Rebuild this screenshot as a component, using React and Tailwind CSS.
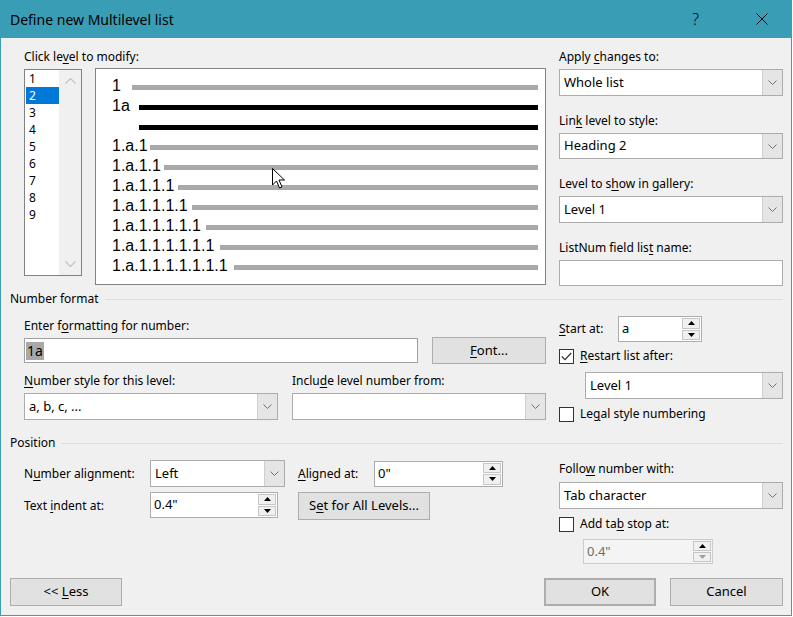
import React from "react";

const U = ({ children }) => <span className="underline underline-offset-2">{children}</span>;

const Chevron = ({ color = "#707070" }) => (
  <svg width="9" height="5" viewBox="0 0 9 5">
    <path d="M0.5 0.5 L4.5 4.5 L8.5 0.5" fill="none" stroke={color} strokeWidth="1" />
  </svg>
);

const Select = ({ value, className = "" }) => (
  <div className={`flex bg-white border border-[#acacac] ${className}`}>
    <div className="flex-1 flex items-center pl-[4px] text-[13px]">{value}</div>
    <div className="w-[20px] bg-[#e5e5e5] border-l border-[#cfcfcf] flex items-center justify-center">
      <Chevron />
    </div>
  </div>
);

const Arrow = ({ up, color = "#000" }) => (
  <svg width="7" height="4" viewBox="0 0 7 4">
    {up ? <path d="M0 4 L3.5 0 L7 4 Z" fill={color} /> : <path d="M0 0 L3.5 4 L7 0 Z" fill={color} />}
  </svg>
);

const Spin = ({ value, className = "", disabled }) => (
  <div
    className={`flex border ${disabled ? "bg-[#f4f4f4] border-[#cccccc] text-[#6d6d6d]" : "bg-white border-[#acacac]"} ${className}`}
  >
    <div className="flex-1 flex items-center pl-[3px] text-[13px]">{value}</div>
    <div className="w-[20px] flex flex-col p-[1px] gap-[1px]">
      <div className="flex-1 bg-[#f0f0f0] border border-[#c6c6c6] flex items-center justify-center">
        <Arrow up />
      </div>
      <div className="flex-1 bg-[#f0f0f0] border border-[#c6c6c6] flex items-center justify-center">
        <Arrow color={disabled ? "#a0a0a0" : "#000"} />
      </div>
    </div>
  </div>
);

const Check = ({ checked }) => (
  <div className="w-[15px] h-[15px] border border-[#333] bg-white flex items-center justify-center shrink-0">
    {checked && (
      <svg width="11" height="9" viewBox="0 0 11 9">
        <path d="M0.8 4.5 L4 7.7 L10.2 1" fill="none" stroke="#333" strokeWidth="1.2" />
      </svg>
    )}
  </div>
);

const Btn = ({ children, className = "" }) => (
  <div className={`flex items-center justify-center bg-[#e1e1e1] border border-[#adadad] text-[13px] ${className}`}>
    <span>{children}</span>
  </div>
);

const rows = [
  { t: "1", w: "w-[20px]", bold: false },
  { t: "1a", w: "w-[27px]", bold: true },
  { t: "", w: "w-[27px]", bold: true },
  { t: "1.a.1", w: "w-[38px]", bold: false },
  { t: "1.a.1.1", w: "w-[52px]", bold: false },
  { t: "1.a.1.1.1", w: "w-[66px]", bold: false },
  { t: "1.a.1.1.1.1", w: "w-[80px]", bold: false },
  { t: "1.a.1.1.1.1.1", w: "w-[94px]", bold: false },
  { t: "1.a.1.1.1.1.1.1", w: "w-[108px]", bold: false },
  { t: "1.a.1.1.1.1.1.1.1", w: "w-[122px]", bold: false },
];

const Header = ({ children }) => (
  <div className="flex items-center h-[16px]">
    <span className="leading-[16px]">{children}</span>
    <div className="flex-1 h-px bg-[#dcdcdc] ml-[6px]" />
  </div>
);

export default function App() {
  return (
    <div className="w-[793px] h-[617px] bg-white font-['Noto_Sans',sans-serif] text-[12px] text-black">
      <div className="w-[792px] h-[616px] flex flex-col">
        {/* title bar */}
        <div className="h-[38px] bg-[#3a9db6] flex items-center pl-[10px] shrink-0">
          <span className="text-[14px]">Define new Multilevel list</span>
          <span className="ml-auto text-[16px] font-light mr-[57px]">?</span>
          <svg width="12" height="12" viewBox="0 0 12 12" className="mr-[24px]">
            <path d="M0.5 0.5 L11.5 11.5 M11.5 0.5 L0.5 11.5" stroke="#000" strokeWidth="1" />
          </svg>
        </div>

        <div className="flex-1 flex flex-col bg-[#f0f0f0] border-x border-b border-[#3a9db6] pl-[9px] pr-[8px] pb-[9px]">
          {/* top section */}
          <div className="flex justify-between ml-[14px] pt-[11px]">
            <div className="w-[522px]">
              <div className="h-[16px] leading-[16px]">
                Click le<U>v</U>el to modify:
              </div>
              <div className="flex items-start mt-[3px]">
                <div className="mt-[1px] w-[58px] h-[207px] border border-[#828282] bg-white flex">
                  <div className="flex-1 pl-[1px]">
                    {["1", "2", "3", "4", "5", "6", "7", "8", "9"].map((n) => (
                      <div
                        key={n}
                        className={`h-[17px] leading-[17px] pl-[3px] text-[12px] ${n === "2" ? "bg-[#0078d7] text-white" : ""}`}
                      >
                        {n}
                      </div>
                    ))}
                  </div>
                  <div className="w-[22px] bg-[#f0f0f0] flex flex-col justify-between items-center py-[8px]">
                    <svg width="11" height="6" viewBox="0 0 11 6">
                      <path d="M0.5 5.5 L5.5 0.5 L10.5 5.5" fill="none" stroke="#c2c2c2" strokeWidth="1.2" />
                    </svg>
                    <svg width="11" height="6" viewBox="0 0 11 6">
                      <path d="M0.5 0.5 L5.5 5.5 L10.5 0.5" fill="none" stroke="#c2c2c2" strokeWidth="1.2" />
                    </svg>
                  </div>
                </div>
                <div className="relative ml-[13px] w-[451px] h-[217px] border border-[#828282] bg-white pt-[8px] pl-[16px] pr-[7px]">
                  {rows.map((r, i) => (
                    <div key={i} className="flex items-center h-[20px]">
                      <span className={`${r.w} shrink-0 font-['Liberation_Sans',sans-serif] text-[16px] leading-none -mt-[3px]`}>
                        {r.t}
                      </span>
                      <div className={`flex-1 h-[5px] ${r.bold ? "bg-black" : "bg-[#a9a9a9]"}`} />
                    </div>
                  ))}
                  <svg width="14" height="22" viewBox="0 0 14 22" className="absolute left-[176px] top-[99px]">
                    <path
                      d="M0.5 0.5 L0.5 17 L4.5 13 L7.5 20 L10 19 L7 12 L12.5 12 Z"
                      fill="#fff"
                      stroke="#000"
                      strokeWidth="1"
                    />
                  </svg>
                </div>
              </div>
            </div>

            <div className="w-[224px]">
              <div className="h-[16px] leading-[16px]">
                Apply <U>c</U>hanges to:
              </div>
              <Select value="Whole list" className="mt-[4px] h-[27px]" />
              <div className="h-[16px] leading-[16px] mt-[17px]">
                Lin<U>k</U> level to style:
              </div>
              <Select value="Heading 2" className="mt-[4px] h-[26px]" />
              <div className="h-[16px] leading-[16px] mt-[17px]">
                Level to s<U>h</U>ow in gallery:
              </div>
              <Select value="Level 1" className="mt-[4px] h-[27px]" />
              <div className="h-[16px] leading-[16px] mt-[17px]">
                ListNum field lis<U>t</U> name:
              </div>
              <div className="mt-[4px] h-[26px] bg-white border border-[#acacac]" />
            </div>
          </div>

          {/* number format */}
          <div className="mt-[5px]">
            <Header>Number format</Header>
          </div>
          <div className="flex justify-between ml-[14px] mt-[9px]">
            <div className="w-[522px] pt-[2px]">
              <div className="h-[16px] leading-[16px]">
                Enter f<U>o</U>rmatting for number:
              </div>
              <div className="flex items-center justify-between mt-[3px] h-[27px]">
                <div className="w-[394px] h-[25px] bg-white border border-[#a0a0a0] flex items-center pl-[1px]">
                  <span className="bg-[#a8a8a8] px-[1px] text-[14px] leading-[18px]">1a</span>
                </div>
                <Btn className="w-[114px] h-[27px]">
                  <U>F</U>ont...
                </Btn>
              </div>
              <div className="grid grid-cols-2 gap-x-[14px] mt-[9px]">
                <div className="h-[16px] leading-[16px]">
                  <U>N</U>umber style for this level:
                </div>
                <div className="h-[16px] leading-[16px]">
                  Inclu<U>d</U>e level number from:
                </div>
                <Select value="a, b, c, ..." className="mt-[4px] h-[27px]" />
                <Select value="" className="mt-[4px] h-[27px]" />
              </div>
            </div>

            <div className="w-[224px]">
              <div className="flex items-center h-[26px]">
                <span className="w-[59px]">
                  <U>S</U>tart at:
                </span>
                <Spin value="a" className="w-[84px] h-[26px]" />
              </div>
              <div className="flex items-center h-[16px] mt-[6px] gap-[6px]">
                <Check checked />
                <span>
                  <U>R</U>estart list after:
                </span>
              </div>
              <Select value="Level 1" className="ml-[26px] mt-[8px] h-[27px]" />
              <div className="flex items-center h-[16px] mt-[7px] gap-[6px]">
                <Check />
                <span>
                  Le<U>g</U>al style numbering
                </span>
              </div>
            </div>
          </div>

          {/* position */}
          <div className="mt-[13px]">
            <Header>Position</Header>
          </div>
          <div className="flex justify-between ml-[14px] mt-[9px]">
            <div className="w-[522px]">
              <div className="flex items-center h-[27px]">
                <span className="w-[126px]">
                  N<U>u</U>mber alignment:
                </span>
                <Select value="Left" className="w-[135px] h-[27px]" />
                <span className="ml-[13px] w-[76px]">
                  <U>A</U>ligned at:
                </span>
                <Spin value={'0"'} className="w-[129px] h-[26px]" />
              </div>
              <div className="flex items-center h-[28px] mt-[5px]">
                <span className="w-[126px]">
                  Text <U>i</U>ndent at:
                </span>
                <Spin value={'0.4"'} className="w-[128px] h-[26px] self-start" />
                <Btn className="ml-[20px] w-[132px] h-[28px]">
                  S<U>e</U>t for All Levels...
                </Btn>
              </div>
            </div>

            <div className="w-[224px] pt-[1px]">
              <div className="h-[16px] leading-[16px]">
                Follo<U>w</U> number with:
              </div>
              <Select value="Tab character" className="mt-[5px] h-[27px]" />
              <div className="flex items-center h-[16px] mt-[7px] gap-[6px]">
                <Check />
                <span>
                  Add ta<U>b</U> stop at:
                </span>
              </div>
              <Spin value={'0.4"'} disabled className="ml-[24px] mt-[7px] w-[130px] h-[25px]" />
            </div>
          </div>

          {/* buttons */}
          <div className="flex mt-auto">
            <Btn className="w-[112px] h-[28px]">
              {"<< "}
              <U>L</U>ess
            </Btn>
            <Btn className="ml-auto w-[112px] h-[28px] border-2 border-[#0078d7]">OK</Btn>
            <Btn className="ml-[14px] w-[113px] h-[28px]">Cancel</Btn>
          </div>
        </div>
      </div>
    </div>
  );
}
